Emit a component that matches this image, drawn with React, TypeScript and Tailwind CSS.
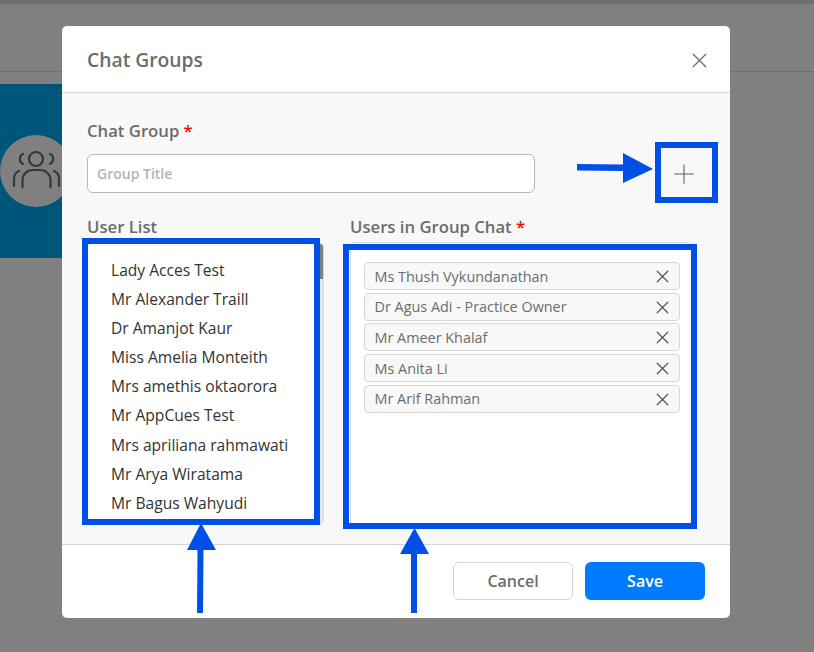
import { X, Plus } from 'lucide-react';

const users = [
  'Lady Acces Test',
  'Mr Alexander Traill',
  'Dr Amanjot Kaur',
  'Miss Amelia Monteith',
  'Mrs amethis oktaorora',
  'Mr AppCues Test',
  'Mrs apriliana rahmawati',
  'Mr Arya Wiratama',
  'Mr Bagus Wahyudi',
];

const members = [
  'Ms Thush Vykundanathan',
  'Dr Agus Adi - Practice Owner',
  'Mr Ameer Khalaf',
  'Ms Anita Li',
  'Mr Arif Rahman',
];

function Required() {
  return <span className="text-[#ff0000]"> *</span>;
}

export default function App() {
  return (
    <div className="relative h-[652px] w-[814px] overflow-hidden bg-[#808080] font-['Open_Sans',sans-serif]">
      {/* page behind the backdrop */}
      <div className="h-[4px] bg-[#6e6e6e]" />
      <div className="h-[68px] border-b border-[#6f6f6f]" />
      <div className="mt-[12px] flex h-[174px] w-[62px] items-center bg-[#00567a]">
        <div className="flex h-[72px] w-[72px] shrink-0 items-center justify-center rounded-full bg-[#808080]">
          <svg viewBox="0 0 48 48" className="h-[48px] w-[48px]" fill="none" stroke="#383838" strokeWidth="2.2" strokeLinecap="round">
            <circle cx="24" cy="12" r="7" />
            <path d="M10.500 40.500V33a10 10 0 0 1 10-10h8a10 10 0 0 1 10 10v7.500" />
            <path d="M11 7a5.500 5.500 0 0 0 0 10" />
            <path d="M38 7a5.500 5.500 0 0 1 0 10" />
            <path d="M2 39v-7q0-6 5-8" />
            <path d="M47 39v-7q0-6-5-8" />
          </svg>
        </div>
      </div>

      {/* modal */}
      <div className="absolute left-[62px] top-[26px] flex h-[592px] w-[668px] flex-col overflow-hidden rounded-[5px] bg-white">
        <div className="flex h-[67px] shrink-0 items-center justify-between border-b border-[#d4d4d4] pl-[25px] pr-[18.500px]">
          <h1 className="pt-[2px] text-[19.300px] font-semibold text-[#6c6c6c]">Chat Groups</h1>
          <X className="mt-[2px] h-[25px] w-[25px] text-[#6c6c6c]" strokeWidth={1.2} />
        </div>

        <div className="flex-1 bg-[#f8f8f8] px-[25px] pt-[27px]">
          <label className="block h-[22px] text-[16.700px] font-semibold leading-[22px] text-[#6c6c6c]">
            Chat Group<Required />
          </label>
          <div className="mt-[12px] flex items-center">
            <div className="flex h-[39px] w-[448px] shrink-0 items-center rounded-[6px] border border-[#b8b8b8] bg-white px-[9px] text-[14px] font-semibold text-[#b4b4b4]">
              Group Title
            </div>
            <div className="ml-[129px] flex h-[39px] w-[39px] shrink-0 items-center justify-center">
              <Plus className="h-[32px] w-[32px] text-[#5c5c5c]" strokeWidth={0.8} />
            </div>
          </div>

          <div className="mt-[23px] flex gap-[26px]">
            <div className="w-[237px]">
              <div className="h-[22px] text-[16.700px] font-semibold leading-[22px] text-[#6c6c6c]">User List</div>
              <div className="relative mt-[5px] h-[282px] overflow-hidden rounded-[4px] border border-[#d8d8d8] bg-white pl-[23px] pt-[12px]">
                {users.map((name) => (
                  <div key={name} className="h-[29.100px] text-[15.600px] leading-[29px] text-[#333333]">
                    {name}
                  </div>
                ))}
                <div className="absolute right-0 top-0 h-full w-[4px] bg-[#e6e6e6]">
                  <div className="h-[35px] bg-[#808080]" />
                </div>
              </div>
            </div>

            <div className="w-[342px]">
              <div className="h-[22px] text-[16.700px] font-semibold leading-[22px] text-[#6c6c6c]">
                Users in Group Chat<Required />
              </div>
              <div className="mt-[4px] flex h-[283px] flex-col gap-[2.700px] rounded-[4px] border border-[#d8d8d8] bg-white pl-[13px] pr-[11px] pt-[19px]">
                {members.map((name) => (
                  <div
                    key={name}
                    className="flex h-[28px] items-center justify-between rounded-[4px] border border-[#d6d6d6] bg-[#f8f8f8] pl-[9.500px] pr-[6px] text-[14.400px] text-[#6c6c6c]"
                  >
                    <span className="pt-[1px]">{name}</span>
                    <X className="mt-[1px] h-[21px] w-[21px] text-[#555555]" strokeWidth={1.4} />
                  </div>
                ))}
              </div>
            </div>
          </div>
        </div>

        <div className="flex h-[74px] shrink-0 items-start justify-end gap-[12px] border-t border-[#d4d4d4] pr-[25px] pt-[17px]">
          <button className="h-[38px] w-[120px] rounded-[6px] border border-[#d4d4d4] bg-white text-[16px] font-semibold text-[#6c6c6c]">
            Cancel
          </button>
          <button className="h-[38px] w-[120px] rounded-[6px] bg-[#007bff] text-[16px] font-semibold text-white">
            Save
          </button>
        </div>
      </div>

      {/* blue annotations drawn over the screenshot */}
      <div className="absolute left-[655px] top-[142px] h-[61px] w-[63px] border-[6px] border-[#004fe6]" />
      <div className="absolute left-[82px] top-[238px] h-[287px] w-[238px] border-[6px] border-[#004fe6]" />
      <div className="absolute left-[343px] top-[244px] h-[285px] w-[354px] border-[6px] border-[#004fe6]" />
      <svg className="absolute left-0 top-0 h-[652px] w-[814px]" viewBox="0 0 814 652" fill="#004fe6">
        <path d="M577 164 L623 164.5 L623 153 L653 169 L623 183 L623 171 L577 170.5 Z" />
        <path d="M201 523 L216 550 L203.500 550 L203 613 L197 613 L197.500 550 L187 550 Z" />
        <path d="M414.500 528 L429 554 L417 554 L417 613 L411 613 L411 554 L400 554 Z" />
      </svg>
    </div>
  );
}
